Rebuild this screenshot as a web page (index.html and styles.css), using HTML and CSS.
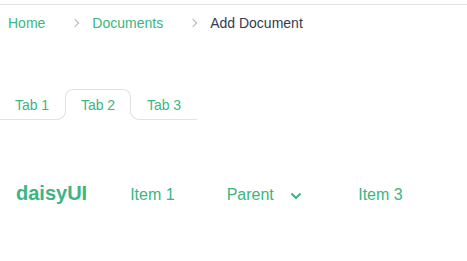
FILE: index.html
```html
<!DOCTYPE html>
<html lang="en">
<head>
  <meta charset="UTF-8">
  <title>Add Document</title>
  <link rel="stylesheet" href="styles.css">
</head>
<body>

  <div class="page">
    <!-- breadcrumbs -->
    <ul class="crumbs">
      <li><a href="#">Home</a></li>
      <li class="sep"></li>
      <li><a href="#">Documents</a></li>
      <li class="sep"></li>
      <li class="current">Add Document</li>
    </ul>

    <!-- tabs -->
    <div class="tabs">
      <a class="tab" href="#">Tab 1</a>
      <a class="tab active" href="#">Tab 2</a>
      <a class="tab" href="#">Tab 3</a>
    </div>

    <!-- navbar -->
    <nav class="navbar">
      <a class="brand" href="#">daisyUI</a>
      <ul class="menu">
        <li><a href="#">Item 1</a></li>
        <li>
          <a class="parent" href="#">Parent
            <svg class="chev" width="12" height="12" viewBox="0 0 12 12">
              <path d="M1.5 3.5 L6 8 L10.5 3.5" fill="none" stroke="currentColor" stroke-width="2"/>
            </svg>
          </a>
        </li>
        <li><a href="#">Item 3</a></li>
      </ul>
    </nav>
  </div>

</body>
</html>
```

FILE: styles.css
```css
body {
  margin: 0;
  background: #fff;
  font-family: "Liberation Sans", Arial, sans-serif;
  color: #333c4d;
}

a {
  color: #3bb581;
  text-decoration: none;
}

ul {
  list-style: none;
  margin: 0;
  padding: 0;
}

.page {
  padding-top: 4px;
}

/* breadcrumbs */
.crumbs {
  display: flex;
  align-items: center;
  border-top: 1px solid #e2e2e2;
  padding: 8px 0 0 8px;
  font-size: 14px;
  line-height: 20px;
}

.crumbs .sep {
  width: 6px;
  height: 6px;
  margin: 0 14px 0 27px;
  border-top: 1px solid #b3b6bd;
  border-right: 1px solid #b3b6bd;
  box-sizing: border-box;
  transform: rotate(45deg);
}

.crumbs .current {
  color: #333c4d;
}

/* tabs */
.tabs {
  display: flex;
  margin: 56px 0 0 -1px;
  font-size: 14px;
  line-height: 28px;
}

.tab {
  width: 66px;
  box-sizing: border-box;
  text-align: center;
  padding-top: 1px;
  border-top: 1px solid transparent;
  border-bottom: 1px solid #e2e2e2;
}

.tab.active {
  position: relative;
  border: 1px solid #e2e2e2;
  border-bottom: 0;
  padding-bottom: 1px;
  border-radius: 8px 8px 0 0;
}

.tab.active::before,
.tab.active::after {
  content: "";
  position: absolute;
  bottom: 0;
  width: 9px;
  height: 9px;
}

.tab.active::before {
  left: -9px;
  background: radial-gradient(circle at top left, transparent 7.6px, #e2e2e2 8px, #e2e2e2 8.6px, #fff 9.2px);
}

.tab.active::after {
  right: -9px;
  background: radial-gradient(circle at top right, transparent 7.6px, #e2e2e2 8px, #e2e2e2 8.6px, #fff 9.2px);
}

/* navbar */
.navbar {
  display: flex;
  align-items: baseline;
  margin-top: 59px;
  padding-left: 16px;
  line-height: 28px;
}

.brand {
  font-size: 20px;
  font-weight: bold;
}

.menu {
  display: flex;
  align-items: baseline;
  margin-left: 17px;
  font-size: 16px;
}

.menu a {
  display: inline-block;
  padding: 0 26px;
}

.menu .parent {
  padding-right: 30px;
}

.chev {
  margin-left: 12px;
  vertical-align: middle;
}
```
